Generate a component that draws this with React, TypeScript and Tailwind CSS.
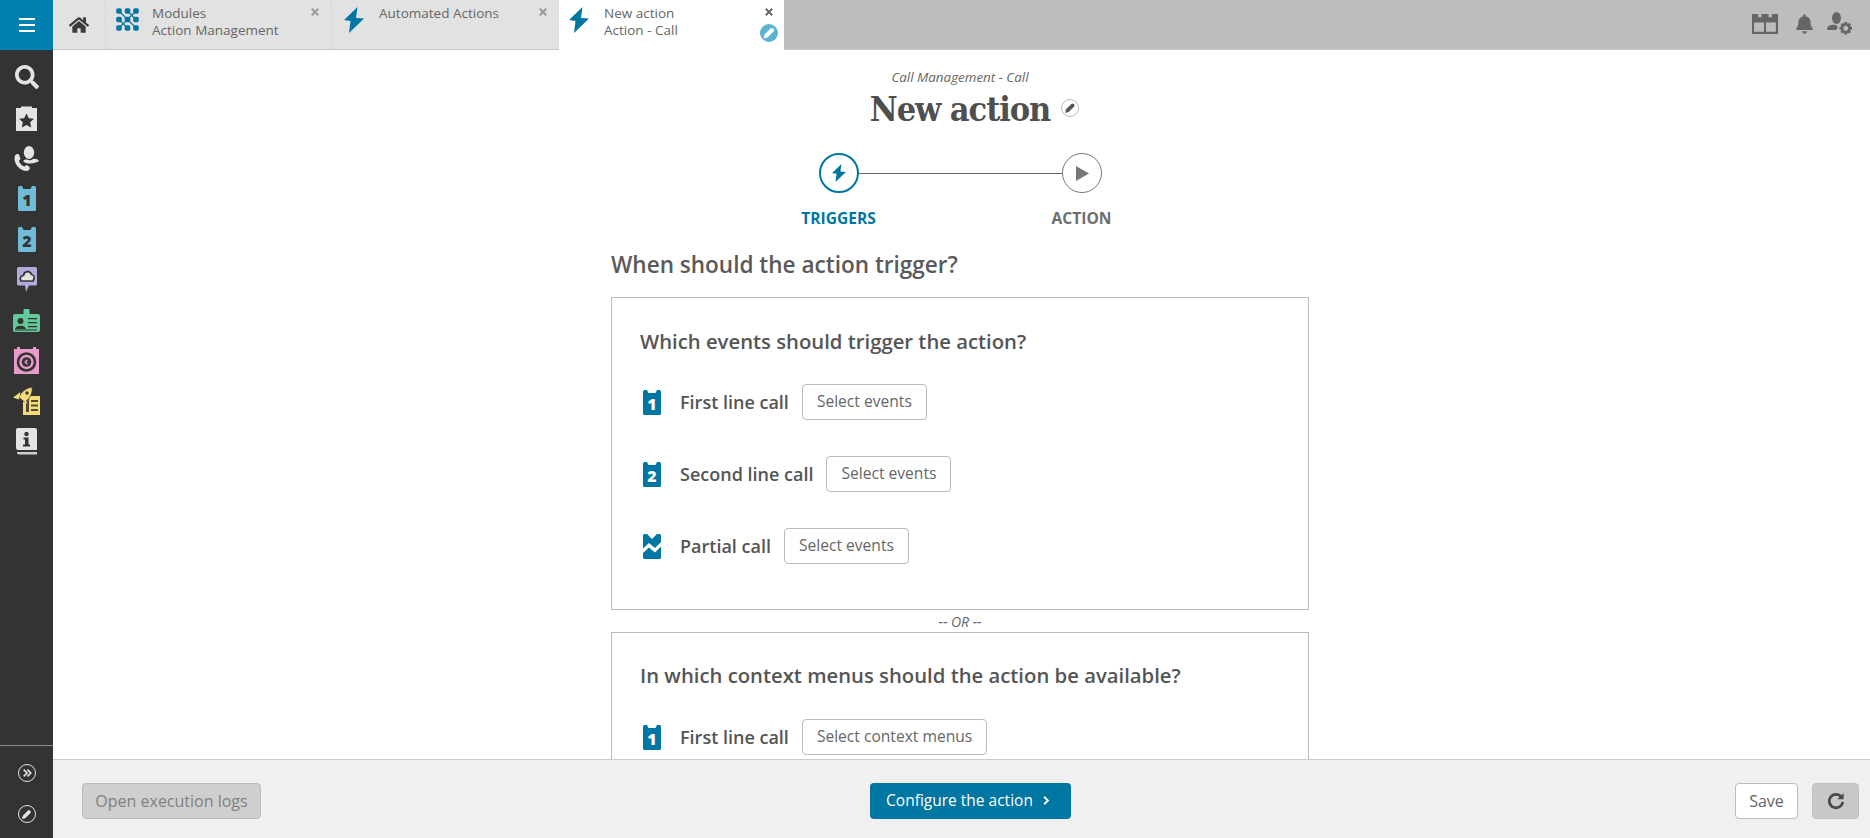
import { FaHome, FaSearch, FaBell } from "react-icons/fa";

const blue = "#0076a3";

const Bolt = ({ className = "" }: { className?: string }) => (
  <svg viewBox="0 0 20 26" className={className} fill="currentColor">
    <path d="M13.5 0 L0 13 L6.5 14 L5 26 L20 11.5 L12 11 Z" />
  </svg>
);

const ModulesIcon = () => (
  <svg viewBox="0 0 23 23" className="w-[23px] h-[23px]" fill={blue}>
    {[
      [3, 3], [11.5, 3], [20, 3],
      [3, 11.5], [11.5, 11.5], [20, 11.5],
      [3, 20], [11.5, 20], [20, 20],
    ].map(([x, y]) => (
      <rect key={`${x}-${y}`} x={x - 2.8} y={y - 2.8} width="5.6" height="5.6" rx="1.8" />
    ))}
    <path d="M3 20 L20 3 M3 3 L11.5 11.5 M11.5 11.5 L20 20 M3 11.5 L11.5 20 M11.5 3 L20 11.5" stroke={blue} strokeWidth="1.2" />
  </svg>
);

const CloseX = ({ className = "" }: { className?: string }) => (
  <svg viewBox="0 0 10 10" className={`w-[8px] h-[8px] ${className}`} stroke="currentColor" strokeWidth="2.4">
    <path d="M1 1 L9 9 M9 1 L1 9" />
  </svg>
);

const Ticket = ({ color, ink, num }: { color: string; ink: string; num: string }) => (
  <svg viewBox="0 0 18 25" className="w-[18px] h-[25px]">
    <path
      d="M1.5 0 H4 L5.5 3 H12.5 L14 0 H16.5 A1.5 1.5 0 0 1 18 1.5 V23.5 A1.5 1.5 0 0 1 16.5 25 H1.5 A1.5 1.5 0 0 1 0 23.5 V1.5 A1.5 1.5 0 0 1 1.5 0 Z"
      fill={color}
    />
    <text x="9" y="19.5" textAnchor="middle" fontSize="16" fontWeight="800" fontFamily="'Open Sans', sans-serif" fill={ink}>
      {num}
    </text>
  </svg>
);

const PartialTicket = () => (
  <svg viewBox="0 0 18 25" className="w-[18px] h-[25px]">
    <path
      d="M1.5 0 H4 L9 5 L14 0 H16.5 A1.5 1.5 0 0 1 18 1.5 V8 L12 14 L6 9 L0 14.5 V1.5 A1.5 1.5 0 0 1 1.5 0 Z"
      fill={blue}
    />
    <path
      d="M0 19 L6 13.5 L12 18.5 L18 12.5 V23.5 A1.5 1.5 0 0 1 16.5 25 H1.5 A1.5 1.5 0 0 1 0 23.5 Z"
      fill={blue}
    />
  </svg>
);

const Pencil = ({ className = "" }: { className?: string }) => (
  <svg viewBox="0 0 18 18" className={className} fill="currentColor">
    <path d="M3.5 14.5 L4.5 10.5 L10.5 4.5 C11.3 3.7 12.5 3.7 13.3 4.5 L13.5 4.7 C14.3 5.5 14.3 6.7 13.5 7.5 L7.5 13.5 Z" />
  </svg>
);

const NavClipboard = () => (
  <svg viewBox="0 0 21 26" className="w-[21px] h-[26px]">
    <path d="M0 3 H5 V1.5 H16 V3 H21 V26 H0 Z" fill="#e4e4e4" />
    <path d="M10.5 8.5 L12.8 13.2 L18 13.8 L14.2 17.3 L15.2 22.5 L10.5 20 L5.8 22.5 L6.8 17.3 L3 13.8 L8.2 13.2 Z" fill="#333" />
  </svg>
);

const NavPhone = () => (
  <svg viewBox="0 0 25 25" className="w-[25px] h-[25px]" fill="#e4e4e4">
    <ellipse cx="15" cy="6.5" rx="5.2" ry="6.5" />
    <path d="M10 16 C8 14.5 11 13 13 13.5 C15 14.5 17 14.5 19 13 C21 12.5 24.5 13.5 25 15 C22 17 15 19 10 16 Z" />
    <path d="M1 9.5 C-1 16 4 24 12 25 C15 25 17 22.5 15 20.5 L12.5 19 L10.5 20.5 C8 20 5.5 17.5 5 14.5 L6.5 13 L5 8.5 C4 7.5 2 8 1 9.5 Z" />
  </svg>
);

const NavCloud = () => (
  <svg viewBox="0 0 20 25" className="w-[20px] h-[25px]">
    <path d="M1.5 0 H18.5 A1.5 1.5 0 0 1 20 1.5 V17 A1.5 1.5 0 0 1 18.5 18.5 H12 L9 25 L8 18.5 H1.5 A1.5 1.5 0 0 1 0 17 V1.5 A1.5 1.5 0 0 1 1.5 0 Z" fill="#b5a8dc" />
    <path d="M4 14 C2 10.5 4.5 8.5 6.5 8.5 C7 4 13 3 14.5 7.5 C17 7.5 18 11 16 14 Z" fill="#e4e4e4" stroke="#333" strokeWidth="1.7" />
  </svg>
);

const NavCard = () => (
  <svg viewBox="0 0 27 23" className="w-[27px] h-[23px]">
    <rect x="10.5" y="0" width="6" height="7" rx="1" fill="#62c99b" />
    <rect x="0" y="5" width="27" height="18" rx="2" fill="#62c99b" />
    <circle cx="7.5" cy="12" r="3" fill="#333" />
    <path d="M2 20 C2.5 15.5 12.5 15.5 13 20 Z M15 9 H24 V10.3 H15 Z M15 13 H24 V14.3 H15 Z M2 20.5 H24 V21.5 H2 Z M15 17 H24 V18.3 H15 Z" fill="#333" />
  </svg>
);

const NavCalendar = () => (
  <svg viewBox="0 0 25 27" className="w-[25px] h-[27px]">
    <path d="M0 2 H3 V0 H6 V2 H19 V0 H22 V2 H25 V27 H0 Z" fill="#e79ccb" />
    <circle cx="12.5" cy="15" r="8.5" fill="none" stroke="#333" strokeWidth="2.6" />
    <circle cx="12.5" cy="15" r="4.8" fill="#333" />
    <path d="M13.5 12.8 L11.2 15 L13.5 17.2" fill="none" stroke="#e79ccb" strokeWidth="1.5" />
  </svg>
);

const NavRocket = () => (
  <svg viewBox="0 0 27 28" className="w-[27px] h-[28px]">
    <rect x="10" y="9" width="17" height="19" fill="#f5dc78" />
    <path d="M13 12 V25 H16 V12 Z M18 13 H25 V15 H18 Z M18 17.5 H25 V19.5 H18 Z M18 22 H25 V24 H18 Z" fill="#333" fillOpacity="0.85" />
    <path d="M19 0 C20 6 17 11 12 15.5 L6 10.5 C7.5 5.5 12 1.5 19 0 Z" fill="#f5dc78" stroke="#333" strokeWidth="0.8" />
    <path d="M7.5 5 L0 10.5 L6 12.5 Z M12 14 L10 20 L14.5 15 Z" fill="#f5dc78" />
    <circle cx="14" cy="6" r="1.7" fill="#333" />
  </svg>
);

const NavBook = () => (
  <svg viewBox="0 0 21 27" className="w-[21px] h-[27px]">
    <path d="M2 0 H19 A2 2 0 0 1 21 2 V22 H2 A2 2 0 0 1 0 20 V2 A2 2 0 0 1 2 0 Z" fill="#e4e4e4" />
    <path d="M1 24 H21 V26.5 H3 A2 2 0 0 1 1 24 Z" fill="#cfcfcf" />
    <circle cx="10.5" cy="6" r="2.2" fill="#333" />
    <path d="M7.5 9.5 H12.5 V16.5 H14 V18.5 H7 V16.5 H9 V11.5 H7.5 Z" fill="#333" />
  </svg>
);

const NavCircle = ({ children }: { children: React.ReactNode }) => (
  <div className="w-[18px] h-[18px] rounded-full border-[1.5px] border-[#e4e4e4] text-[#e4e4e4] flex items-center justify-center">
    {children}
  </div>
);

const navItems = [
  <FaSearch key="search" className="w-[24px] h-[24px] text-[#e4e4e4]" />,
  <NavClipboard key="clip" />,
  <NavPhone key="phone" />,
  <Ticket key="one" color="#70bcd8" ink="#333" num="1" />,
  <Ticket key="two" color="#70bcd8" ink="#333" num="2" />,
  <NavCloud key="cloud" />,
  <NavCard key="card" />,
  <NavCalendar key="cal" />,
  <NavRocket key="rocket" />,
  <NavBook key="book" />,
];

const Sidebar = () => (
  <aside className="w-[53px] shrink-0 bg-[#333333] flex flex-col">
    <div className="h-[50px] bg-[#0080b0] flex flex-col items-center justify-center gap-[4px]">
      <span className="w-[16px] h-[2px] bg-white" />
      <span className="w-[16px] h-[2px] bg-white" />
      <span className="w-[16px] h-[2px] bg-white" />
    </div>
    <nav className="flex flex-col items-center pt-[7px]">
      {navItems.map((icon, i) => (
        <div key={i} className="h-[40.5px] flex items-center justify-center">
          {icon}
        </div>
      ))}
    </nav>
    <div className="mt-auto h-[93px] border-t border-[#8a8a8a] flex flex-col items-center pt-[18px] gap-[23px]">
      <NavCircle>
        <svg viewBox="0 0 12 12" className="w-[10px] h-[10px]" fill="none" stroke="currentColor" strokeWidth="2">
          <path d="M2 2 L6 6 L2 10 M6.5 2 L10.5 6 L6.5 10" />
        </svg>
      </NavCircle>
      <NavCircle>
        <Pencil className="w-[15px] h-[15px] shrink-0" />
      </NavCircle>
    </div>
  </aside>
);

const TabText = ({ one, two }: { one: string; two?: string }) => (
  <div className="text-[13.5px] leading-[17px] text-[#666666] pt-[5px]">
    <div>{one}</div>
    {two && <div>{two}</div>}
  </div>
);

const Header = () => (
  <header className="h-[50px] shrink-0 flex bg-[#bdbdbd] border-b border-[#c4c4c4]">
    <div className="w-[53px] bg-[#e2e2e2] border-r border-dashed border-[#d2d2d2] flex items-center justify-center">
      <FaHome className="w-[20px] h-[20px] text-[#3a3a3a]" />
    </div>
    <div className="w-[226px] bg-[#e2e2e2] border-r border-dashed border-[#d2d2d2] flex gap-[13px] pl-[10px] relative">
      <div className="pt-[8px]">
        <ModulesIcon />
      </div>
      <TabText one="Modules" two="Action Management" />
      <CloseX className="absolute right-[12px] top-[8px] text-[#999999]" />
    </div>
    <div className="w-[227px] bg-[#e2e2e2] flex gap-[15px] pl-[12px] relative">
      <div className="pt-[7px] text-[#0076a3]">
        <Bolt className="w-[20px] h-[26px]" />
      </div>
      <TabText one="Automated Actions" />
      <CloseX className="absolute right-[12px] top-[8px] text-[#999999]" />
    </div>
    <div className="w-[225px] h-[50px] bg-white flex gap-[15px] pl-[10px] relative">
      <div className="pt-[7px] text-[#0076a3]">
        <Bolt className="w-[20px] h-[26px]" />
      </div>
      <TabText one="New action" two="Action - Call" />
      <CloseX className="absolute right-[11px] top-[8px] text-[#666666]" />
      <div className="absolute right-[6px] top-[24px] w-[18px] h-[18px] rounded-full bg-[#5ab3d3] text-white">
        <Pencil className="w-[18px] h-[18px]" />
      </div>
    </div>
    <div className="ml-auto flex items-center pr-[18px] text-[#666666] pb-[2px]">
      <svg viewBox="0 0 25 19" className="w-[26px] h-[20px] mr-[18px]" fill="currentColor">
        <path d="M0 0 H6 V3 H9 V0 H16 V3 H19 V0 H25 V19 H0 Z M2 8 V17 H11.5 V8 Z M13.5 8 V17 H23 V8 Z" fillRule="evenodd" />
      </svg>
      <FaBell className="w-[17px] h-[20px] mr-[14px]" />
      <svg viewBox="0 0 25 24" className="w-[25px] h-[24px]" fill="currentColor">
        <ellipse cx="9.5" cy="6" rx="4.5" ry="6" />
        <path d="M0 17 C0 13 6 12 9 13 C11 14 11 17 9 18 H2 C1 18 0 18 0 17 Z" />
        <path
          d="M17.5 10 H20 L20.5 12 L22.3 11 L24 12.7 L23 14.5 L25 15 V17.5 L23 18 L24 19.8 L22.3 21.5 L20.5 20.5 L20 22.5 H17.5 L17 20.5 L15.2 21.5 L13.5 19.8 L14.5 18 L12.5 17.5 V15 L14.5 14.5 L13.5 12.7 L15.2 11 L17 12 Z M18.75 13.8 A2.45 2.45 0 1 0 18.76 13.8 Z"
          fillRule="evenodd"
        />
      </svg>
    </div>
  </header>
);

const Row = ({ icon, label, action, className = "" }: { icon: React.ReactNode; label: string; action: string; className?: string }) => (
  <div className={`flex items-center h-[36px] ${className}`}>
    <div className="w-[18px] ml-[3px] mr-[19px] flex">{icon}</div>
    <span className="text-[18px] font-semibold text-[#555555] mr-[13px]">{label}</span>
    <button className="h-[36px] px-[14px] bg-white border border-[#bbbbbb] rounded-[4px] text-[15.6px] text-[#666666]">
      {action}
    </button>
  </div>
);

const Step = ({ icon, label, active }: { icon: React.ReactNode; label: string; active?: boolean }) => (
  <div className="w-[40px] flex flex-col items-center relative">
    <div
      className={`w-[40px] h-[40px] rounded-full flex items-center justify-center bg-white ${
        active ? "border-2 border-[#0076a3] text-[#0076a3]" : "border border-[#777777] text-[#777777]"
      }`}
    >
      {icon}
    </div>
    <div className={`mt-[15px] text-[15.6px] leading-[20px] font-bold whitespace-nowrap ${active ? "text-[#0076a3]" : "text-[#6e6e6e]"}`}>
      {label}
    </div>
  </div>
);

const Main = () => (
  <main className="flex-1 min-h-0 overflow-hidden bg-white flex flex-col items-center pr-[3px]">
    <p className="mt-[18px] text-[13.4px] leading-[19px] italic text-[#666666]">Call Management - Call</p>
    <div className="mt-0 relative">
      <h1 className="text-[34px] leading-[44px] font-bold tracking-[-1.08px] text-[#4f4f4f] font-['DejaVu_Serif_Condensed','DejaVu_Serif',serif]">New action</h1>
      <div className="absolute left-full ml-[11px] top-[12px] w-[18px] h-[18px] rounded-full border border-[#bbbbbb] text-[#555555]">
        <Pencil className="w-[16px] h-[16px]" />
      </div>
    </div>
    <div className="mt-[22px] flex items-start relative">
      <Step icon={<Bolt className="w-[14px] h-[18px]" />} label="TRIGGERS" active />
      <div className="w-[203px] h-px bg-[#666666] mt-[20px]" />
      <Step
        icon={
          <svg viewBox="0 0 14 16" className="w-[13px] h-[15px] ml-[2px]" fill="currentColor">
            <path d="M0 0 L14 8 L0 16 Z" />
          </svg>
        }
        label="ACTION"
      />
    </div>
    <div className="w-[698px] shrink-0">
      <h2 className="mt-[21px] text-[22.55px] leading-[32px] font-semibold text-[#5a5a5a]">When should the action trigger?</h2>
      <section className="mt-[16px] h-[313px] border border-[#bbbbbb] pl-[28px] pr-[27px] pt-[30px]">
        <h3 className="text-[20.3px] leading-[26px] font-semibold text-[#555555]">Which events should trigger the action?</h3>
        <Row className="mt-[30px]" icon={<Ticket color={blue} ink="#fff" num="1" />} label="First line call" action="Select events" />
        <Row className="mt-[36px]" icon={<Ticket color={blue} ink="#fff" num="2" />} label="Second line call" action="Select events" />
        <Row className="mt-[36px]" icon={<PartialTicket />} label="Partial call" action="Select events" />
      </section>
      <p className="h-[22px] text-center text-[14px] leading-[24px] italic text-[#666666]">-- OR --</p>
      <section className="border border-[#bbbbbb] pl-[28px] pr-[27px] pt-[29px] pb-[40px]">
        <h3 className="text-[20.3px] leading-[26px] font-semibold text-[#555555]">In which context menus should the action be available?</h3>
        <Row className="mt-[31px]" icon={<Ticket color={blue} ink="#fff" num="1" />} label="First line call" action="Select context menus" />
      </section>
    </div>
  </main>
);

const Footer = () => (
  <footer className="h-[79px] shrink-0 bg-[#f0f0f0] border-t border-[#cccccc] flex items-center pl-[29px] pr-[11px] pt-[3px]">
    <div className="flex-1 flex">
      <button className="h-[36px] w-[179px] bg-[#cfcfcf] border border-[#bbbbbb] rounded-[4px] text-[16px] text-[#808080]">
        Open execution logs
      </button>
    </div>
    <button className="h-[36px] w-[201px] bg-[#0076a3] rounded-[4px] text-[15.5px] text-white flex items-center justify-center gap-[10px] pr-[6px]">
      Configure the action
      <svg viewBox="0 0 8 12" className="w-[6px] h-[9px]" fill="none" stroke="currentColor" strokeWidth="2.4">
        <path d="M1.5 1 L6.5 6 L1.5 11" />
      </svg>
    </button>
    <div className="flex-1 flex justify-end gap-[14px]">
      <button className="h-[36px] w-[63px] bg-white border border-[#bbbbbb] rounded-[4px] text-[16px] text-[#666666]">
        Save
      </button>
      <button className="h-[36px] w-[47px] bg-[#c8c8c8] border border-[#c0c0c0] rounded-[4px] flex items-center justify-center">
        <svg viewBox="0 0 20 20" className="w-[18px] h-[18px]" fill="none" stroke="#4a4a4a" strokeWidth="3">
          <path d="M16 5.5 A7.5 7.5 0 1 0 17.5 11" />
          <path d="M18.5 1 V8 H11.5 Z" fill="#4a4a4a" stroke="none" />
        </svg>
      </button>
    </div>
  </footer>
);

export default function App() {
  return (
    <div className="flex w-full h-[838px] overflow-hidden font-['Open_Sans',sans-serif]">
      <Sidebar />
      <div className="flex-1 min-w-0 flex flex-col">
        <Header />
        <Main />
        <Footer />
      </div>
    </div>
  );
}
